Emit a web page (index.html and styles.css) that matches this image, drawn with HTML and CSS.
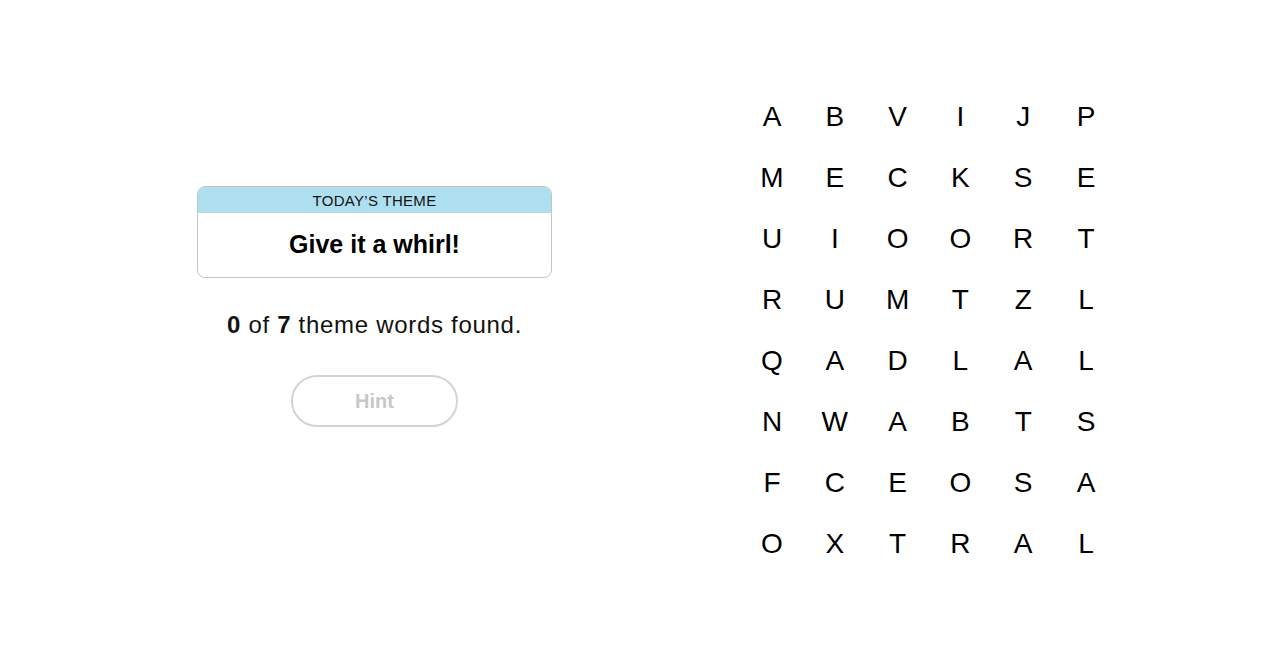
FILE: index.html
```html
<!DOCTYPE html>
<html lang="en">
<head>
<meta charset="utf-8">
<title>Strands</title>
<link rel="stylesheet" href="styles.css">
</head>
<body>
<main class="game">
  <section class="panel">
    <div class="theme-card">
      <div class="theme-head">TODAY’S THEME</div>
      <div class="theme-body">Give it a whirl!</div>
    </div>
    <p class="progress"><b>0</b> of <b>7</b> theme words found.</p>
    <button class="hint" type="button">Hint</button>
  </section>
  <section class="board">
    <span>A</span><span>B</span><span>V</span><span>I</span><span>J</span><span>P</span>
    <span>M</span><span>E</span><span>C</span><span>K</span><span>S</span><span>E</span>
    <span>U</span><span>I</span><span>O</span><span>O</span><span>R</span><span>T</span>
    <span>R</span><span>U</span><span>M</span><span>T</span><span>Z</span><span>L</span>
    <span>Q</span><span>A</span><span>D</span><span>L</span><span>A</span><span>L</span>
    <span>N</span><span>W</span><span>A</span><span>B</span><span>T</span><span>S</span>
    <span>F</span><span>C</span><span>E</span><span>O</span><span>S</span><span>A</span>
    <span>O</span><span>X</span><span>T</span><span>R</span><span>A</span><span>L</span>
  </section>
</main>
</body>
</html>
```

FILE: styles.css
```css
html, body {
  margin: 0;
  padding: 0;
  background: #fff;
}
body {
  font-family: "Liberation Sans", Arial, sans-serif;
  color: #000;
}
.game {
  display: flex;
  align-items: flex-start;
  padding: 87px 0 0 197px;
}
.panel {
  width: 355px;
  margin-top: 99px;
  display: flex;
  flex-direction: column;
  align-items: center;
}
.theme-card {
  width: 100%;
  box-sizing: border-box;
  border: 1px solid #c4c4c4;
  border-radius: 8px;
  overflow: hidden;
}
.theme-head {
  height: 26px;
  line-height: 27px;
  background: #aedfee;
  text-align: center;
  font-size: 15px;
  letter-spacing: 0.3px;
  color: #121212;
}
.theme-body {
  height: 64px;
  line-height: 62px;
  text-align: center;
  font-size: 25px;
  font-weight: 700;
}
.progress {
  margin: 32px 0 0;
  font-size: 24px;
  line-height: 30px;
  letter-spacing: 0.7px;
  color: #121212;
}
.progress b {
  font-weight: 700;
}
.hint {
  margin-top: 35px;
  width: 167px;
  height: 52px;
  box-sizing: border-box;
  border: 2px solid #d4d4d4;
  border-radius: 26px;
  background: #fff;
  color: #c8c8c8;
  font-family: "Liberation Sans", Arial, sans-serif;
  font-size: 20px;
  font-weight: 700;
  padding: 0;
}
.board {
  margin-left: 188.6px;
  display: grid;
  grid-template-columns: repeat(6, 62.8px);
  grid-auto-rows: 60.9px;
}
.board span {
  display: flex;
  align-items: center;
  justify-content: center;
  font-size: 28px;
  line-height: 1;
}
```
